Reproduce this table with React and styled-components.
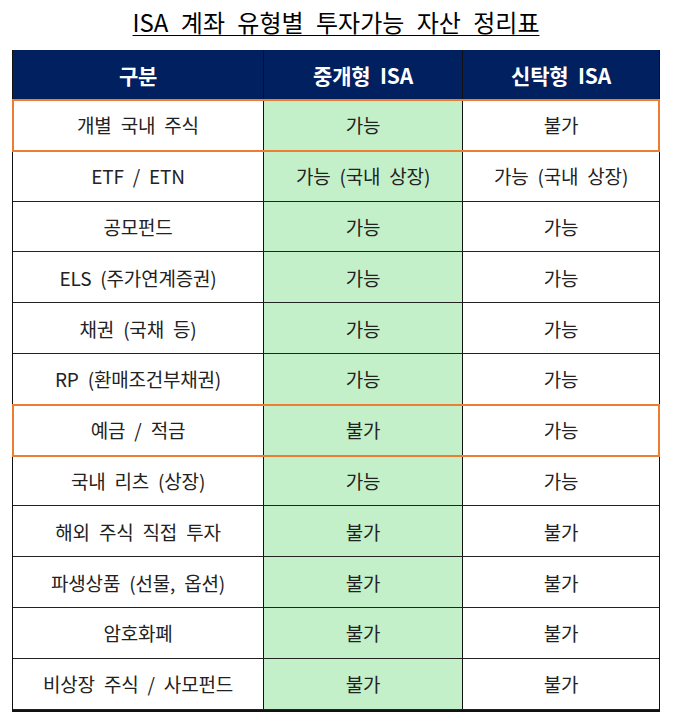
import React from "react";
import styled, { createGlobalStyle } from "styled-components";

const GlobalStyle = createGlobalStyle`
  body {
    margin: 0;
    background: #fff;
    font-family: "Noto Sans CJK KR", "Noto Sans", sans-serif;
  }
`;

const Page = styled.div`
  width: 673px;
  padding: 5px 0 0 12px;
  box-sizing: border-box;
`;

const Title = styled.h1`
  margin: 0 0 12px;
  width: 648px;
  text-align: center;
  font-size: 24px;
  font-weight: 400;
  line-height: 33px;
  color: #000;
  letter-spacing: 0;
  word-spacing: 7px;
  text-decoration: underline;
  text-underline-offset: 3px;
  text-decoration-thickness: 1px;
`;

const Table = styled.div`
  width: 648px;
  border-left: 1px solid #111;
  border-right: 1px solid #111;
  border-bottom: 2px solid #111;
  box-sizing: border-box;
`;

const Row = styled.div`
  display: grid;
  grid-template-columns: 251px 199px 1fr;
  height: ${(p) => (p.$head ? "50px" : "50.8px")};
  box-sizing: border-box;
  border-bottom: 1px solid #222;
  position: relative;
  background: ${(p) => (p.$head ? "#002060" : "#fff")};
  outline: ${(p) => (p.$mark ? "2px solid #ED7D31" : "none")};
  outline-offset: -1px;
  z-index: ${(p) => (p.$mark ? 1 : 0)};
`;

const Cell = styled.div`
  display: flex;
  align-items: center;
  justify-content: center;
  font-size: ${(p) => (p.$head ? "21px" : "19px")};
  font-weight: ${(p) => (p.$head ? 700 : 400)};
  color: ${(p) => (p.$head ? "#fff" : "#222")};
  background: ${(p) => (p.$green ? "#C4F0C9" : "transparent")};
  border-right: ${(p) => (p.$last ? "none" : "1px solid #111")};
  letter-spacing: -0.2px;
  word-spacing: ${(p) => (p.$head ? "5px" : "5px")};
`;

const rows = [
  ["개별 국내 주식", "가능", "불가", true],
  ["ETF / ETN", "가능 (국내 상장)", "가능 (국내 상장)"],
  ["공모펀드", "가능", "가능"],
  ["ELS (주가연계증권)", "가능", "가능"],
  ["채권 (국채 등)", "가능", "가능"],
  ["RP (환매조건부채권)", "가능", "가능"],
  ["예금 / 적금", "불가", "가능", true],
  ["국내 리츠 (상장)", "가능", "가능"],
  ["해외 주식 직접 투자", "불가", "불가"],
  ["파생상품 (선물, 옵션)", "불가", "불가"],
  ["암호화폐", "불가", "불가"],
  ["비상장 주식 / 사모펀드", "불가", "불가"],
];

export default function App() {
  return (
    <Page>
      <GlobalStyle />
      <Title>ISA 계좌 유형별 투자가능 자산 정리표</Title>
      <Table>
        <Row $head>
          <Cell $head>구분</Cell>
          <Cell $head>중개형 ISA</Cell>
          <Cell $head $last>신탁형 ISA</Cell>
        </Row>
        {rows.map(([name, a, b, mark]) => (
          <Row key={name} $mark={mark}>
            <Cell>{name}</Cell>
            <Cell $green>{a}</Cell>
            <Cell $last>{b}</Cell>
          </Row>
        ))}
      </Table>
    </Page>
  );
}
